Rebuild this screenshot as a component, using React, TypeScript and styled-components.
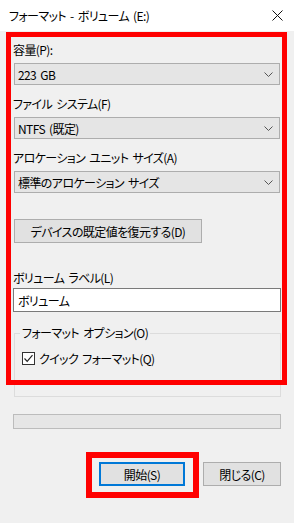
import styled, { createGlobalStyle } from "styled-components";

const GlobalStyle = createGlobalStyle`
  html, body {
    margin: 0;
    padding: 0;
    background: #ffffff;
  }
  body {
    font-family: "Noto Sans CJK JP", "Liberation Sans", sans-serif;
    font-size: 12px;
    letter-spacing: -0.6px;
    word-spacing: 2px;
    color: #000000;
    font-feature-settings: "palt";
  }
`;

const Chevron = () => (
  <svg width="9" height="5" viewBox="0 0 9 5">
    <polyline points="0.5,0.5 4.5,4.5 8.5,0.5" fill="none" stroke="#555" strokeWidth="1" />
  </svg>
);

const Combo = ({ value }: { value: string }) => (
  <ComboBox>
    <span>{value}</span>
    <Chevron />
  </ComboBox>
);

export default function App() {
  return (
    <>
      <GlobalStyle />
      <Window>
        <TitleBar>
          <span>フォーマット - ボリューム (E:)</span>
          <CloseIcon width="11" height="11" viewBox="0 0 11 11">
            <path d="M0.5 0.5 L10.5 10.5 M10.5 0.5 L0.5 10.5" stroke="#111" strokeWidth="1" />
          </CloseIcon>
        </TitleBar>
        <Body>
          <Label>容量(P):</Label>
          <Combo value="223 GB" />
          <Label $gap={11}>ファイル システム(F)</Label>
          <Combo value="NTFS (既定)" />
          <Label $gap={11}>アロケーション ユニット サイズ(A)</Label>
          <Combo value="標準のアロケーション サイズ" />
          <PushButton $width={188} $mt={26}>デバイスの既定値を復元する(D)</PushButton>
          <Label $gap={27}>ボリューム ラベル(L)</Label>
          <TextBox>ボリューム</TextBox>
          <GroupBox>
            <legend>フォーマット オプション(O)</legend>
            <CheckRow>
              <CheckBox>
                <svg width="11" height="11" viewBox="0 0 11 11">
                  <polyline points="1.5,5.5 4.2,8.3 9.5,2.2" fill="none" stroke="#222" strokeWidth="1.2" />
                </svg>
              </CheckBox>
              <span>クイック フォーマット(Q)</span>
            </CheckRow>
          </GroupBox>
          <Progress />
          <ButtonRow>
            <PushButton $width={86} $primary>開始(S)</PushButton>
            <PushButton $width={78}>閉じる(C)</PushButton>
          </ButtonRow>
        </Body>
        <Highlight $x={6} $y={32} $w={281} $h={353} $t={5} />
        <Highlight $x={86} $y={452} $w={113} $h={46} $t={6} />
      </Window>
    </>
  );
}

const Window = styled.div`
  position: relative;
  width: 294px;
  height: 523px;
  display: flex;
  flex-direction: column;
  overflow: hidden;
`;

const TitleBar = styled.div`
  height: 31px;
  flex: none;
  display: flex;
  align-items: center;
  justify-content: space-between;
  padding: 0 11px 0 9px;
  background: #ffffff;
  box-sizing: border-box;
`;

const CloseIcon = styled.svg`
  display: block;
`;

const Body = styled.div`
  flex: 1;
  display: flex;
  flex-direction: column;
  background: #f0f0f0;
  padding: 11px 13px 0 13px;
  border-left: 1px solid #e4e8ee;
  border-right: 1px solid #d8e2ee;
  margin: 0 -1px;
`;

const Label = styled.div<{ $gap?: number }>`
  line-height: 16px;
  height: 16px;
  margin-top: ${(p) => p.$gap ?? 0}px;
  white-space: nowrap;
`;

const ComboBox = styled.div`
  height: 22px;
  margin: 5px 1px 0 1px;
  box-sizing: border-box;
  display: flex;
  align-items: center;
  justify-content: space-between;
  padding: 0 6px 0 3px;
  background: #e5e5e5;
  border: 1px solid #adadad;
  white-space: nowrap;
`;

const PushButton = styled.div<{ $width: number; $mt?: number; $primary?: boolean }>`
  width: ${(p) => p.$width}px;
  height: 24px;
  margin: ${(p) => p.$mt ?? 0}px 0 0 1px;
  box-sizing: border-box;
  display: flex;
  align-items: center;
  justify-content: center;
  background: #e1e1e1;
  border: ${(p) => (p.$primary ? "2px solid #0078d7" : "1px solid #adadad")};
  white-space: nowrap;
`;

const TextBox = styled.div`
  height: 24px;
  margin-top: 2px;
  box-sizing: border-box;
  display: flex;
  align-items: center;
  padding: 0 4px;
  background: #ffffff;
  border: 1px solid #7a7a7a;
`;

const GroupBox = styled.fieldset`
  margin: 13px 0 0 1px;
  min-width: 0;
  padding: 0 0 31px 5px;
  border: 1px solid #dcdcdc;
  & > legend {
    padding: 0 2px;
    line-height: 16px;
  }
`;

const CheckRow = styled.div`
  display: flex;
  align-items: center;
  gap: 4px;
  margin: 11px 0 0 2px;
  height: 13px;
  white-space: nowrap;
`;

const CheckBox = styled.div`
  width: 13px;
  height: 13px;
  box-sizing: border-box;
  border: 1px solid #333333;
  background: #ffffff;
  display: flex;
  align-items: center;
  justify-content: center;
`;

const Progress = styled.div`
  height: 15px;
  margin-top: 17px;
  box-sizing: border-box;
  background: #e6e6e6;
  border: 1px solid #bcbcbc;
`;

const ButtonRow = styled.div`
  display: flex;
  justify-content: flex-end;
  gap: 17px;
  margin-top: 33px;
`;

const Highlight = styled.div<{ $x: number; $y: number; $w: number; $h: number; $t: number }>`
  position: absolute;
  left: ${(p) => p.$x}px;
  top: ${(p) => p.$y}px;
  width: ${(p) => p.$w}px;
  height: ${(p) => p.$h}px;
  box-sizing: border-box;
  border: ${(p) => p.$t}px solid #ff0000;
  pointer-events: none;
`;
